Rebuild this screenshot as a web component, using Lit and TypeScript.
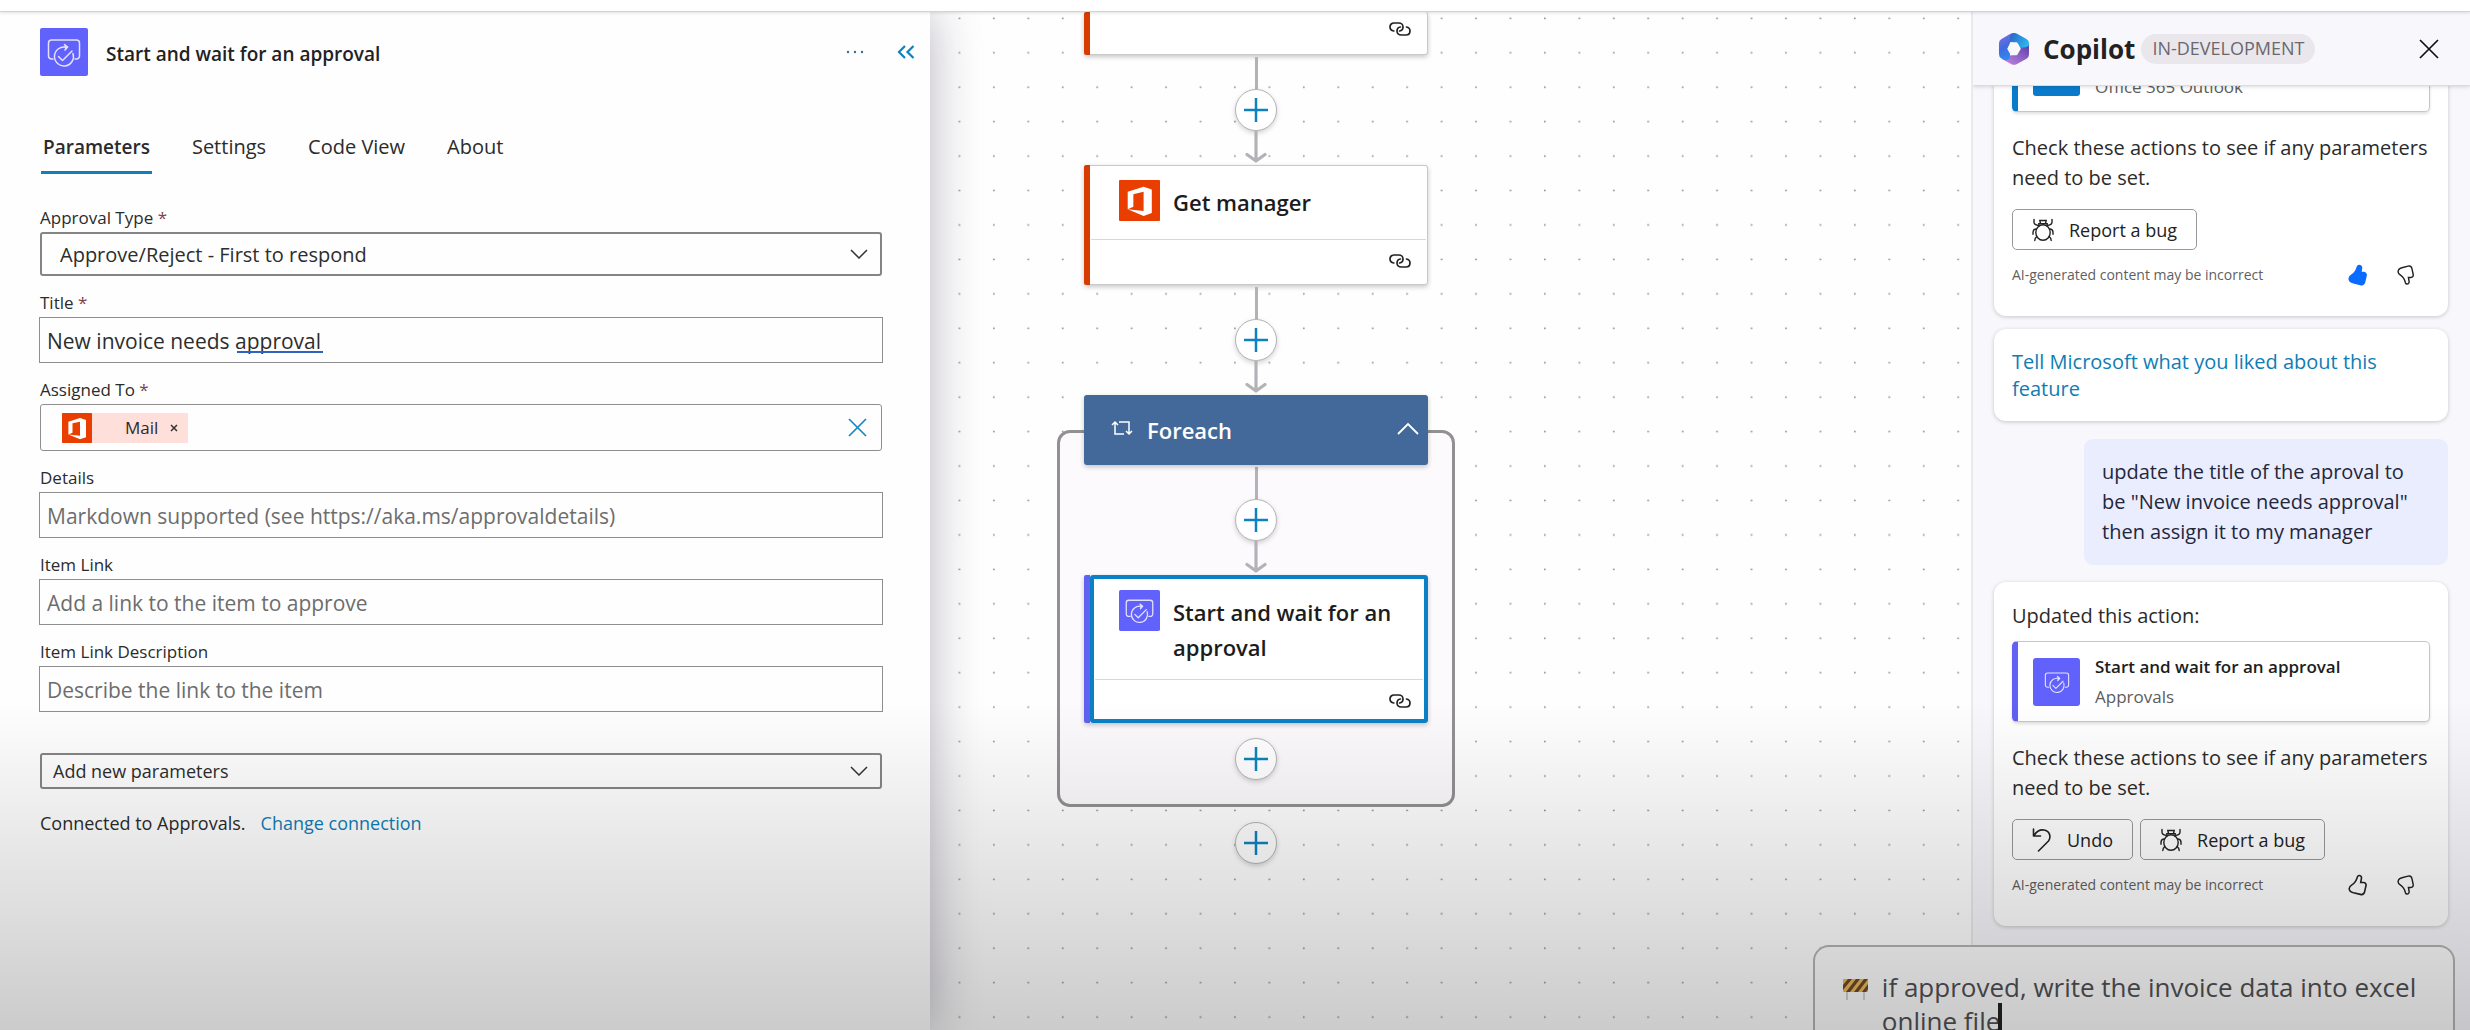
import { LitElement, html, svg, css, nothing } from "lit";
import { customElement, property, state } from "lit/decorators.js";
import { classMap } from "lit/directives/class-map.js";

const base = css`
  *,
  *::before {
    box-sizing: border-box;
  }
  button,
  input,
  select,
  textarea {
    font: inherit;
    color: inherit;
    margin: 0;
  }
  button {
    background: none;
    border: 0;
    padding: 0;
    display: inline-flex;
    align-items: center;
    justify-content: center;
    cursor: pointer;
  }
  svg {
    display: block;
    flex: none;
    fill: none;
  }
  a {
    color: #0f7db5;
    text-decoration: none;
  }
  p {
    margin: 0;
  }
`;

/* ---------- icons ---------- */

const approvalsIcon = (size: number) => html`
  <svg width=${size} height=${size} viewBox="0 0 48 48" aria-hidden="true">
    <rect width="48" height="48" rx="2" fill="#6161fb" />
    <g stroke="#e4e1ff" stroke-width="1.5" stroke-linecap="round" stroke-linejoin="round">
      <path d="M13 31h-1.500a3 3 0 0 1-3-3V15a3 3 0 0 1 3-3h25a3 3 0 0 1 3 3v13a3 3 0 0 1-3 3H35" />
      <path d="M26 19.200A9.500 9.500 0 1 0 33 25.500" />
      <path d="M24.500 16.500l3.200 2.600-2.700 3" fill="#e4e1ff" />
      <path d="M18.500 28.500l4 4L32 23" />
    </g>
  </svg>
`;

const officeIcon = (size: number) => html`
  <svg width=${size} height=${size} viewBox="0 0 40 40" aria-hidden="true">
    <rect width="40" height="40" rx="1" fill="#ea3e00" />
    <path fill="#fff" d="M8.500 28.500v-17L24 6.700l8 2.600v23L24 35 8.500 28.500 24 30.300V11.500l-10 2.300v12.400z" />
  </svg>
`;

const chevronDown = html`
  <svg class="chevron" width="18" height="10" viewBox="0 0 18 10" aria-hidden="true">
    <path d="M1 1l8 8 8-8" stroke="#333" stroke-width="1.500" />
  </svg>
`;

const linkIcon = html`
  <svg width="22" height="14" viewBox="0 0 22 14" aria-hidden="true">
    <g stroke="#222" stroke-width="1.700" stroke-linecap="round">
      <path d="M4.800 9C2.400 8.600 1 7.100 1 5 1 2.600 2.800 1 5.200 1h4.600C12.200 1 14 2.700 14 5c0 2-1.400 3.700-3.400 4" />
      <path d="M17.500 5c2 .4 3.500 1.900 3.500 4 0 2.400-1.800 4-4.200 4h-4.600C9.800 13 8 11.300 8 9c0-2 1.400-3.700 3.400-4" />
    </g>
  </svg>
`;

const bugIcon = html`
  <svg width="22" height="24" viewBox="0 0 22 24" aria-hidden="true">
    <g stroke="#222" stroke-width="1.400" stroke-linecap="round">
      <ellipse cx="11" cy="14.500" rx="7.200" ry="7.800" />
      <path d="M6.800 8.200V5.800h8.400v2.400M8.500 5.500L7.800 2.500h6.400l-.7 3" />
      <path d="M2 1.500v2.700c0 1.800 1.200 2.600 4 3.200M20 1.500v2.700c0 1.800-1.200 2.600-4 3.200" />
      <path d="M3.800 11C1.800 11.300 1 12.600 1 14.500v1.800M18.200 11c2 .3 2.800 1.600 2.800 3.500v1.800M4.600 18.800c-1.300.7-1.800 1.700-1.800 3.700M17.400 18.800c1.300.7 1.800 1.700 1.800 3.700" />
    </g>
  </svg>
`;

const undoIcon = html`
  <svg width="20" height="24" viewBox="0 0 20 24" aria-hidden="true">
    <path
      d="M1.500 1v7h7M2 7.500C4.500 3.500 8 1.500 12 2c5.500.8 7.500 6.500 4.500 11L6.500 23"
      stroke="#222"
      stroke-width="1.600"
      stroke-linecap="round"
      stroke-linejoin="round"
    />
  </svg>
`;

const thumbPath =
  "M11.500 1.500c1.700.2 2.200 1.700 1.900 3.200L12.700 8.500h2.800c1.800 0 2.900 1.400 2.500 3.100l-1.400 6.200c-.5 2-2.300 3.100-4.300 2.600L5.500 18.800C3.200 18.200 1.200 16.700 1.200 14.500c0-1.800 1.200-2.700 2.700-3.600 3.200-1.900 4.700-5 5.500-8 .3-1 1-1.500 2.100-1.400z";

const thumbIcon = (up: boolean, on = false) => html`
  <svg width="20" height="22" viewBox="0 0 20 22" aria-hidden="true">
    <g transform=${up ? "" : "translate(1 21.500) scale(.9 -.95)"}>
      <path d=${thumbPath} fill=${on ? "#0a6cff" : "none"} stroke=${on ? "#0a6cff" : "#222"} stroke-width="1.600" />
    </g>
  </svg>
`;

const copilotLogo = html`
  <svg width="32" height="32" viewBox="0 0 32 32" aria-hidden="true">
    <defs>
      <linearGradient id="top" x1="0" y1="0" x2="1" y2="0.6">
        <stop offset="0" stop-color="#2b62c9" />
        <stop offset="1" stop-color="#2bbdf0" />
      </linearGradient>
      <linearGradient id="left" x1="0.3" y1="0" x2="0.6" y2="1">
        <stop offset="0" stop-color="#7d6fe0" />
        <stop offset="0.5" stop-color="#3f6be0" />
        <stop offset="1" stop-color="#2d8cf2" />
      </linearGradient>
      <linearGradient id="base" x1="1" y1="0" x2="0" y2="1">
        <stop offset="0" stop-color="#5a3fa5" />
        <stop offset="1" stop-color="#c98be8" />
      </linearGradient>
    </defs>
    <path fill="url(#top)" d="M13 .8a6 6 0 0 1 6 0l9.500 5.200A5 5 0 0 1 31 10.500V20l-9-5-2-4-8-2V1.400z" />
    <path fill="url(#base)" d="M31 12v9.500a5 5 0 0 1-2.500 4.300L19 31a6 6 0 0 1-6 0l-9-5 8-3.500 7-1.500 3.500-6c3-1 7 0 8.500-3z" />
    <path fill="url(#left)" d="M15 .3c-2 .5-3 2-3 4V10l-2 5 2 5v4c0 2-3.500 4-6 2.800L3.500 25.500A5 5 0 0 1 1 21.200V10.500A5 5 0 0 1 3.500 6L12 1z" />
    <path fill="#f8f7fb" d="M13.500 10.300h5l3.200 5.500-3.200 5.500h-5l-3.200-5.500z" stroke="#f8f7fb" stroke-width="2" stroke-linejoin="round" />
  </svg>
`;

const barrierIcon = html`
  <svg class="barrier" width="28" height="24" viewBox="0 0 28 24" aria-hidden="true">
    <path d="M5 15v8M22 15v8" stroke="#b5b5b5" stroke-width="1.200" />
    <rect x="1" y="2" width="25" height="13" rx="1" fill="#e9b65c" />
    <path fill="#6b4a24" d="M1 8l5-6h4L1 13zM4 15L14 2h4L8 15zM12 15L22 2h4L16 15zM20 15l6-8v5l-2 3z" />
  </svg>
`;

/* ---------- parameters panel ---------- */

@customElement("parameters-panel")
export class ParametersPanel extends LitElement {
  @state() private tab = "Parameters";

  static styles = [
    base,
    css`
      :host {
        display: block;
        background: #fefefe;
        padding: 16px 48px 0 40px;
        box-shadow: 0 0 48px rgba(30, 20, 50, 0.32);
        z-index: 1;
        min-width: 0;
      }
      .head {
        display: flex;
        align-items: center;
        gap: 18px;
      }
      .head h1 {
        flex: 1;
        margin: 0;
        font-size: 19px;
        line-height: 24px;
        font-weight: 600;
        color: #222;
        padding-top: 3px;
      }
      .tools {
        display: flex;
        align-items: center;
        gap: 33px;
        margin-right: -33px;
      }
      .tabs {
        display: flex;
        gap: 38px;
        margin-top: 57px;
      }
      .tab {
        font-size: 20px;
        line-height: 28px;
        padding: 0 2px 10px;
        border-bottom: 3px solid transparent;
      }
      .tab.on {
        font-size: 19px;
        font-weight: 600;
        border-color: #1180b8;
      }
      .tab:first-child {
        margin-left: 1px;
      }
      form {
        display: flex;
        flex-direction: column;
        gap: 15px;
        margin-top: 32px;
      }
      .field {
        display: flex;
        flex-direction: column;
        gap: 2px;
      }
      label {
        font-size: 17px;
        line-height: 24px;
      }
      .req {
        color: #83404a;
      }
      .box {
        position: relative;
        display: flex;
        align-items: center;
      }
      .text {
        margin: 0 -1px;
      }
      .box input,
      .box select {
        width: 100%;
        height: 46px;
        border: 1px solid #8f8f8f;
        background: transparent;
        border-radius: 0;
        padding: 2px 7px 0;
        font-size: 21px;
        color: #2d2d2d;
        outline: none;
      }
      .box select {
        appearance: none;
        height: 44px;
        border: 2px solid #858585;
        border-radius: 3px;
        padding: 0 44px 0 18px;
        font-size: 20px;
      }
      .box select.small {
        height: 36px;
        padding-left: 11px;
        font-size: 18px;
      }
      input::placeholder {
        color: #6d6d6d;
        opacity: 1;
      }
      .chevron {
        position: absolute;
        right: 14px;
        pointer-events: none;
      }
      .mark {
        position: absolute;
        left: 198px;
        bottom: 10px;
        width: 86px;
        height: 2px;
        background: #2f62c4;
      }
      .box.people {
        border: 1px solid #8f8f8f;
        border-radius: 3px;
        height: 47px;
        padding: 0 14px 0 21px;
      }
      .people input {
        flex: 1;
        min-width: 0;
        height: 40px;
        border: 0;
      }
      .token {
        display: flex;
        align-items: center;
        height: 30px;
        background: #ffdfda;
        font-size: 17px;
        padding-right: 10px;
        flex: none;
      }
      .token span {
        margin: 0 12px 0 33px;
      }
      .more {
        margin-top: 26px;
      }
      .connection {
        margin-top: 22px;
        display: flex;
        gap: 15px;
        font-size: 18px;
        line-height: 24px;
      }
    `,
  ];

  private textField(id: string, label: string, placeholder: string) {
    return html`
      <div class="field">
        <label for=${id}>${label}</label>
        <div class="box text"><input id=${id} type="text" placeholder=${placeholder} /></div>
      </div>
    `;
  }

  render() {
    return html`
      <header class="head">
        ${approvalsIcon(48)}
        <h1>Start and wait for an approval</h1>
        <div class="tools">
          <button type="button" aria-label="More commands">
            <svg width="18" height="4" viewBox="0 0 18 4">
              <g fill="#38708c"><circle cx="2" cy="2" r="1.200" /><circle cx="9" cy="2" r="1.200" /><circle cx="16" cy="2" r="1.200" /></g>
            </svg>
          </button>
          <button type="button" aria-label="Collapse panel">
            <svg width="18" height="14" viewBox="0 0 18 14">
              <path d="M8 1L2 7l6 6M16.500 1l-6 6 6 6" stroke="#0f82bd" stroke-width="2.200" />
            </svg>
          </button>
        </div>
      </header>
      <nav class="tabs" role="tablist">
        ${["Parameters", "Settings", "Code View", "About"].map(
          (t) => html`<button
            type="button"
            role="tab"
            aria-selected=${t === this.tab}
            class=${classMap({ tab: true, on: t === this.tab })}
            @click=${() => (this.tab = t)}
          >
            ${t}
          </button>`
        )}
      </nav>
      <form>
        <div class="field">
          <label for="type">Approval Type <span class="req">*</span></label>
          <div class="box">
            <select id="type">
              <option>Approve/Reject - First to respond</option>
            </select>
            ${chevronDown}
          </div>
        </div>
        <div class="field">
          <label for="title">Title <span class="req">*</span></label>
          <div class="box text">
            <input id="title" type="text" spellcheck="false" .value=${"New invoice needs approval"} />
            <span class="mark"></span>
          </div>
        </div>
        <div class="field">
          <label for="assigned">Assigned To <span class="req">*</span></label>
          <div class="box people">
            <div class="token">
              ${officeIcon(30)}<span>Mail</span>
              <button type="button" aria-label="Remove Mail">
                <svg width="8" height="8" viewBox="0 0 8 8"><path d="M1 1l6 6M7 1L1 7" stroke="#333" stroke-width="1.500" /></svg>
              </button>
            </div>
            <input id="assigned" type="text" />
            <button type="button" aria-label="Clear">
              <svg width="19" height="19" viewBox="0 0 19 19"><path d="M1 1l17 17M18 1L1 18" stroke="#1488c6" stroke-width="1.700" /></svg>
            </button>
          </div>
        </div>
        ${this.textField("details", "Details", "Markdown supported (see https://aka.ms/approvaldetails)")}
        ${this.textField("link", "Item Link", "Add a link to the item to approve")}
        ${this.textField("desc", "Item Link Description", "Describe the link to the item")}
        <div class="box more">
          <select class="small" aria-label="Add new parameters">
            <option>Add new parameters</option>
          </select>
          ${chevronDown}
        </div>
      </form>
      <p class="connection">Connected to Approvals. <a href="#connection">Change connection</a></p>
    `;
  }
}

/* ---------- flow designer ---------- */

@customElement("flow-canvas")
export class FlowCanvas extends LitElement {
  static styles = [
    base,
    css`
      :host {
        display: block;
        position: relative;
        overflow: hidden;
        background: #fefefe;
        min-width: 0;
      }
      .dots {
        position: absolute;
        inset: 0;
        width: 100%;
        height: 100%;
      }
      .flow {
        position: relative;
        width: 398px;
        margin-left: 127px;
        display: flex;
        flex-direction: column;
        align-items: center;
      }
      .node {
        width: 344px;
        display: flex;
        background: #fff;
        border-radius: 3px;
        box-shadow: 0 2px 5px rgba(0, 0, 0, 0.22);
      }
      .bar {
        width: 6px;
        background: #d83b01;
        border-radius: 2px 0 0 2px;
      }
      .body {
        flex: 1;
        border: 1px solid #c9c9c9;
        border-left: 0;
        border-radius: 0 3px 3px 0;
      }
      .selected .bar {
        background: #6161f2;
      }
      .selected .body {
        border: 4px solid #0a80c6;
        border-radius: 3px;
      }
      .node-head {
        min-height: 73px;
        display: flex;
        align-items: flex-start;
        gap: 13px;
        padding: 19px 8px 15px 29px;
        font-size: 22px;
        line-height: 35px;
        font-weight: 600;
        color: #1c1c1c;
      }
      .node-head svg {
        margin-top: -5px;
      }
      .selected .node-head {
        padding: 16px 0 14px 25px;
      }
      .node-foot {
        height: 45px;
        margin: 0 1px;
        padding: 14px 15px 0 0;
        display: flex;
        align-items: flex-start;
        justify-content: flex-end;
        border-top: 1px solid #d8d8d8;
      }
      .selected .node-foot {
        height: 40px;
        padding-right: 12px;
      }
      .clipped .body {
        border-top: 0;
      }
      .clipped .node-foot {
        height: 42px;
        padding-top: 10px;
        border-top: 0;
      }
      .connector {
        display: flex;
        flex-direction: column;
        align-items: center;
        padding: 2px 0;
      }
      .line {
        width: 3px;
        height: 32px;
        background: #b3b2b6;
      }
      .add {
        width: 42px;
        height: 42px;
        border-radius: 50%;
        border: 1px solid #b5b5b8;
        background: #fff;
        box-shadow: 0 2px 5px rgba(0, 0, 0, 0.18);
      }
      .scope-head {
        position: relative;
        z-index: 1;
        width: 344px;
        height: 70px;
        border-radius: 3px;
        background: #43699a;
        color: #fff;
        display: flex;
        align-items: center;
        gap: 14px;
        padding: 0 9px 4px 27px;
        box-shadow: 0 2px 5px rgba(0, 0, 0, 0.22);
        font-size: 22px;
        font-weight: 600;
      }
      .scope-head span {
        flex: 1;
        line-height: 30px;
        padding-top: 4px;
      }
      .scope {
        width: 100%;
        margin-top: -35px;
        padding: 32px 0 24px;
        border: 3px solid #919191;
        border-radius: 13px;
        background: #fdfafd;
        display: flex;
        flex-direction: column;
        align-items: center;
      }
      .after {
        margin-top: 15px;
      }
      .outer {
        background: #fdfdfd;
      }
    `,
  ];

  private add(cls = "") {
    return html`<button type="button" class="add ${cls}" aria-label="Insert a new step">
      <svg width="24" height="24" viewBox="0 0 24 24"><path d="M12 0v24M0 12h24" stroke="#0d82be" stroke-width="2.500" /></svg>
    </button>`;
  }

  private connector() {
    return html`
      <div class="connector">
        <div class="line"></div>
        ${this.add()}
        <svg width="22" height="32" viewBox="0 0 22 32" aria-hidden="true">
          <path d="M11 0v30M2 23.500l9 6.500 9-6.500" stroke="#b3b2b6" stroke-width="3.200" stroke-linecap="round" stroke-linejoin="round" />
        </svg>
      </div>
    `;
  }

  private node(title: string, icon: unknown, cls = "") {
    return html`
      <article class="node ${cls}">
        <div class="bar"></div>
        <div class="body">
          ${title ? html`<div class="node-head">${icon}<span>${title}</span></div>` : nothing}
          <div class="node-foot">${linkIcon}</div>
        </div>
      </article>
    `;
  }

  render() {
    return html`
      <svg class="dots" aria-hidden="true">
        <defs>
          <pattern id="grid" width="34.440" height="34.440" patternUnits="userSpaceOnUse">
            ${svg`<circle cx="29.400" cy="6.300" r="0.950" fill="#929296" />`}
          </pattern>
        </defs>
        <rect width="100%" height="100%" fill="url(#grid)" />
      </svg>
      <div class="flow">
        ${this.node("", nothing, "clipped")} ${this.connector()} ${this.node("Get manager", officeIcon(41))}
        ${this.connector()}
        <div class="scope-head">
          <svg width="22" height="16" viewBox="0 0 22 16" aria-hidden="true">
            <path
              d="M4 2v12h9M1 5l3-3 3 3M8 2h10v12M15 11l3 3 3-3"
              stroke="#fff"
              stroke-width="1.500"
            />
          </svg>
          <span>Foreach</span>
          <button type="button" aria-label="Collapse Foreach">
            <svg width="22" height="13" viewBox="0 0 22 13"><path d="M1 12L11 2l10 10" stroke="#fff" stroke-width="1.800" /></svg>
          </button>
        </div>
        <section class="scope">
          ${this.connector()} ${this.node("Start and wait for an approval", approvalsIcon(41), "selected")}
          ${this.add("after")}
        </section>
        ${this.add("after outer")}
      </div>
    `;
  }
}

/* ---------- copilot pane ---------- */

@customElement("copilot-pane")
export class CopilotPane extends LitElement {
  @property({ type: Boolean }) liked = true;

  static styles = [
    base,
    css`
      :host {
        display: flex;
        flex-direction: column;
        background: #f8f7fb;
        border-left: 2px solid #ebe9ee;
        overflow: hidden;
        min-width: 0;
        min-height: 0;
      }
      .head {
        flex: none;
        height: 74px;
        display: flex;
        align-items: center;
        padding: 0 31px 0 25px;
        border-bottom: 1px solid #dcdbe0;
        box-shadow: 0 1px 4px rgba(0, 0, 0, 0.14);
        background: #f8f7fb;
        z-index: 1;
      }
      .head h2 {
        margin: 0 6px 0 13px;
        font-size: 26px;
        line-height: 36px;
        font-weight: 700;
        color: #222;
      }
      .badge {
        font-size: 18px;
        line-height: 28px;
        padding: 0 11px 2px;
        border-radius: 15px;
        background: #e9e7ec;
        color: #6a686d;
      }
      .close {
        margin-left: auto;
      }
      .chat {
        flex: 1;
        min-height: 0;
        overflow: hidden;
        display: flex;
        flex-direction: column;
        justify-content: flex-end;
        padding: 0 22px 104px 21px;
        font-size: 20px;
        line-height: 30px;
      }
      .card {
        flex: none;
        background: #fff;
        border-radius: 12px;
        padding: 19px 18px 29px;
        box-shadow: 0 1px 4px rgba(0, 0, 0, 0.2);
      }
      .tell {
        margin-top: 13px;
        padding: 19px 18px;
        line-height: 27px;
      }
      .ask {
        flex: none;
        align-self: flex-end;
        width: 364px;
        max-width: 100%;
        margin: 18px 0 17px;
        padding: 18px;
        border-radius: 9px;
        background: #e9edfe;
        color: #24273c;
      }
      .action {
        height: 81px;
        margin-top: 10px;
        display: flex;
        align-items: center;
        gap: 15px;
        padding-left: 15px;
        border: 1px solid #c6c6c6;
        border-left: 6px solid #6161f2;
        border-radius: 5px;
        box-shadow: 0 2px 3px rgba(0, 0, 0, 0.12);
        background: #fff;
      }
      .action.mail {
        border-left-color: #0a7acb;
      }
      .swatch {
        width: 47px;
        height: 48px;
        border-radius: 3px;
        background: #6161fb;
        display: grid;
        place-items: center;
      }
      .mail .swatch {
        background: #0a7acb;
      }
      .what {
        height: 54px;
        display: flex;
        flex-direction: column;
        justify-content: space-between;
        line-height: 24px;
        font-size: 17px;
        color: #5c5c5c;
      }
      .what strong {
        font-weight: 600;
        color: #1d1d1d;
      }
      .what span:last-child {
        margin-top: auto;
      }
      .note {
        margin: 21px -10px 16px 0;
      }
      .buttons {
        display: flex;
        gap: 7px;
      }
      .btn {
        height: 41px;
        gap: 15px;
        padding: 0 19px;
        border: 1px solid #999;
        border-radius: 5px;
        background: #fff;
        font-size: 18px;
        color: #222;
      }
      .foot {
        margin-top: 13px;
        height: 24px;
        display: flex;
        align-items: center;
        gap: 28px;
        padding-right: 14px;
        font-size: 14px;
        color: #5f5f5f;
      }
      .foot span {
        flex: 1;
      }
    `,
  ];

  private foot(liked: boolean) {
    return html`
      <div class="foot">
        <span>AI-generated content may be incorrect</span>
        <button type="button" aria-label="Like" aria-pressed=${liked}>${thumbIcon(true, liked)}</button>
        <button type="button" aria-label="Dislike">${thumbIcon(false)}</button>
      </div>
    `;
  }

  render() {
    const note = html`<p class="note">Check these actions to see if any parameters need to be set.</p>`;
    const report = html`<button type="button" class="btn">${bugIcon}Report a bug</button>`;
    return html`
      <header class="head">
        ${copilotLogo}
        <h2>Copilot</h2>
        <span class="badge">IN-DEVELOPMENT</span>
        <button type="button" class="close" aria-label="Close">
          <svg width="20" height="20" viewBox="0 0 20 20"><path d="M1 1l18 18M19 1L1 19" stroke="#111" stroke-width="1.700" /></svg>
        </button>
      </header>
      <div class="chat">
        <article class="card">
          <div class="action mail">
            <div class="swatch"></div>
            <div class="what"><span>Office 365 Outlook</span></div>
          </div>
          ${note}
          <div class="buttons">${report}</div>
          ${this.foot(this.liked)}
        </article>
        <div class="card tell"><a href="#feedback">Tell Microsoft what you liked about this feature</a></div>
        <p class="ask">update the title of the aproval to be "New invoice needs approval" then assign it to my manager</p>
        <article class="card">
          <p>Updated this action:</p>
          <div class="action">
            <div class="swatch">${approvalsIcon(36)}</div>
            <div class="what"><strong>Start and wait for an approval</strong><span>Approvals</span></div>
          </div>
          ${note}
          <div class="buttons">
            <button type="button" class="btn">${undoIcon}Undo</button>
            ${report}
          </div>
          ${this.foot(false)}
        </article>
      </div>
    `;
  }
}

/* ---------- page ---------- */

@customElement("app-root")
export class AppRoot extends LitElement {
  static styles = [
    base,
    css`
      :host {
        display: grid;
        grid-template-columns: 930fr 1041fr 499fr;
        grid-template-rows: 12px minmax(0, 1fr);
        position: relative;
        height: 100vh;
        overflow: hidden;
        background: #fefefe;
        color: #2b2b2b;
        font-family: "Open Sans", "Noto Sans", sans-serif;
      }
      .strip {
        grid-column: 1 / -1;
        background: #fff;
        border-bottom: 1px solid #d3d3d5;
        box-shadow: 0 1px 3px rgba(0, 0, 0, 0.12);
        z-index: 2;
      }
      .composer {
        position: absolute;
        right: 15px;
        bottom: -36px;
        width: 26%;
        height: 121px;
        display: flex;
        gap: 12px;
        padding: 23px 24px 0 27px;
        border: 2px solid #b4b4b4;
        border-radius: 16px;
        background: #fcfcfc;
        z-index: 3;
      }
      .barrier {
        margin-top: 7px;
      }
      .entry {
        position: relative;
        flex: 1;
        display: flex;
      }
      .entry textarea {
        flex: 1;
        min-width: 0;
        height: 90px;
        border: 0;
        padding: 0;
        margin-right: -20px;
        resize: none;
        overflow: hidden;
        outline: none;
        background: transparent;
        color: #505053;
        font-size: 26px;
        line-height: 34px;
      }
      .caret {
        position: absolute;
        left: 116px;
        top: 33px;
        width: 4px;
        height: 34px;
        background: #222;
      }
      .shade {
        position: absolute;
        left: 0;
        right: 0;
        bottom: 0;
        height: 330px;
        background: linear-gradient(transparent, rgba(0, 0, 0, 0.2));
        pointer-events: none;
        z-index: 4;
      }
    `,
  ];

  render() {
    return html`
      <div class="strip"></div>
      <parameters-panel></parameters-panel>
      <flow-canvas></flow-canvas>
      <copilot-pane></copilot-pane>
      <div class="composer">
        ${barrierIcon}
        <div class="entry">
          <textarea
            aria-label="Message Copilot"
            spellcheck="false"
            .value=${"if approved, write the invoice data into excel online file"}
          ></textarea>
          <span class="caret"></span>
        </div>
      </div>
      <div class="shade"></div>
    `;
  }
}
